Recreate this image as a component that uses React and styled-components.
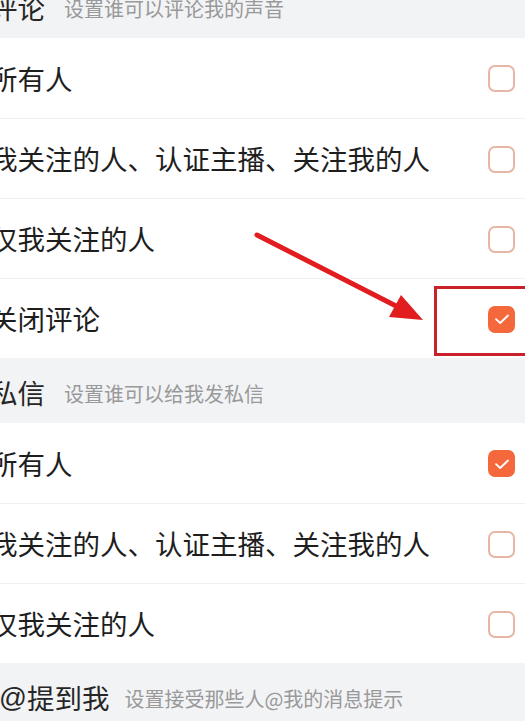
import React from 'react'
import styled, { createGlobalStyle } from 'styled-components'

const GlobalStyle = createGlobalStyle`
  html, body {
    margin: 0;
    padding: 0;
    background: #fff;
    overflow: hidden;
  }
  body {
    font-family: "Noto Sans CJK SC", "Noto Sans", sans-serif;
  }
`

const Page = styled.div`
  position: relative;
  width: 525px;
  height: 721px;
  overflow: hidden;
`

const List = styled.div`
  margin-top: -27px;
  margin-left: -10px;
  display: flex;
  flex-direction: column;
`

const SectionHeader = styled.div`
  display: flex;
  align-items: center;
  gap: ${(p) => (p.tight ? '15px' : '19px')};
  height: 65px;
  padding-top: 4px;
  box-sizing: border-box;
  background: #f2f3f5;
`

const SectionTitle = styled.span`
  display: flex;
  align-items: center;
  font-size: 27.5px;
  color: #262626;
  line-height: 1;
`

const At = styled.span`
  font-family: "Liberation Sans", sans-serif;
  font-size: 1em;
  margin-left: 9px;
`

const SectionHint = styled.span`
  font-size: 20px;
  color: #999;
  line-height: 1;
  margin-top: 2px;
`

const Row = styled.div`
  display: flex;
  align-items: center;
  justify-content: space-between;
  height: 80px;
  padding-right: 10px;
  padding-top: 1px;
  background: #fff;
  border-top: ${(p) => (p.first ? 'none' : '1px solid #f0f0f2')};
  box-sizing: border-box;
`

const RowLabel = styled.span`
  font-size: 27.5px;
  color: #1e1e1e;
  line-height: 1;
`

const Box = styled.span`
  display: flex;
  align-items: center;
  justify-content: center;
  width: 27px;
  height: 27px;
  box-sizing: border-box;
  border-radius: 7px;
  border: 2px solid ${(p) => (p.checked ? '#f4683c' : '#e6b6a6')};
  background: ${(p) => (p.checked ? '#f4683c' : '#fff')};
`

const Overlay = styled.svg`
  position: absolute;
  left: 0;
  top: 0;
  pointer-events: none;
`

const Highlight = styled.div`
  position: absolute;
  left: 434px;
  top: 286px;
  width: 110px;
  height: 70px;
  box-sizing: border-box;
  border: 3px solid #c9202a;
`

const Check = ({ checked }) => (
  <Box checked={checked}>
    {checked && (
      <svg width="16" height="12" viewBox="0 0 16 12">
        <path d="M2 6.2 L6.2 10 L14 2.5" fill="none" stroke="#fff" strokeWidth="1.8" strokeLinecap="round" strokeLinejoin="round" />
      </svg>
    )}
  </Box>
)

const sections = [
  {
    title: '评论',
    hint: '设置谁可以评论我的声音',
    options: ['所有人', '我关注的人、认证主播、关注我的人', '仅我关注的人', '关闭评论'],
    selected: 3,
  },
  {
    title: '私信',
    hint: '设置谁可以给我发私信',
    options: ['所有人', '我关注的人、认证主播、关注我的人', '仅我关注的人'],
    selected: 0,
  },
  {
    title: '提到我',
    at: true,
    hint: '设置接受那些人@我的消息提示',
    options: [],
    selected: -1,
  },
]

export default function App() {
  return (
    <Page>
      <GlobalStyle />
      <List>
        {sections.map((s) => (
          <React.Fragment key={s.title}>
            <SectionHeader tight={s.at}>
              <SectionTitle>
                {s.at && <At>@</At>}
                {s.title}
              </SectionTitle>
              <SectionHint>{s.hint}</SectionHint>
            </SectionHeader>
            {s.options.map((o, i) => (
              <Row key={o} first={i === 0}>
                <RowLabel>{o}</RowLabel>
                <Check checked={i === s.selected} />
              </Row>
            ))}
          </React.Fragment>
        ))}
      </List>
      <Highlight />
      <Overlay width="525" height="721" viewBox="0 0 525 721">
        <line x1="257" y1="235" x2="398" y2="307" stroke="#e11d1f" strokeWidth="5" strokeLinecap="round" />
        <polygon points="423,320 389,317 401,295" fill="#e11d1f" />
      </Overlay>
    </Page>
  )
}
